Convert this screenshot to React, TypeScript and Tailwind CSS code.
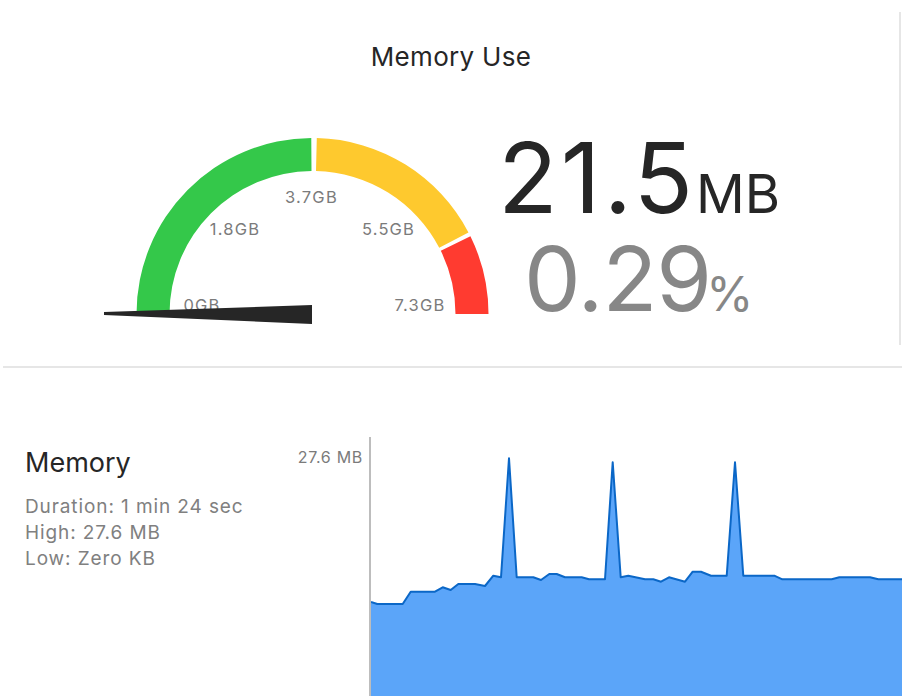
import React from 'react'

const CX = 212.5
const CY = 184
const R_OUT = 176
const R_IN = 143

// annular sector, angles in degrees (0 = right, 90 = top), drawn from a0 down to a1
function sector(a0: number, a1: number) {
  const pt = (r: number, a: number) => {
    const rad = (a * Math.PI) / 180
    return `${(CX + r * Math.cos(rad)).toFixed(2)} ${(CY - r * Math.sin(rad)).toFixed(2)}`
  }
  return `M ${pt(R_OUT, a0)} A ${R_OUT} ${R_OUT} 0 0 1 ${pt(R_OUT, a1)} L ${pt(R_IN, a1)} A ${R_IN} ${R_IN} 0 0 0 ${pt(R_IN, a0)} Z`
}

const labels = [
  { t: '3.7GB', x: 211.5, y: 73 },
  { t: '1.8GB', x: 135, y: 104.5 },
  { t: '5.5GB', x: 288.5, y: 104.5 },
  { t: '0GB', x: 102, y: 181 },
  { t: '7.3GB', x: 320, y: 181 },
]

function Gauge() {
  return (
    <svg width="392" height="200" viewBox="0 0 392 200" className="shrink-0">
      <path d={sector(180, 90.4)} fill="#34C84A" />
      <path d={sector(88.6, 27.6)} fill="#FEC92E" />
      <path d={sector(26.2, 0)} fill="#FF3B30" />
      {labels.map((l) => (
        <text
          key={l.t}
          x={l.x}
          y={l.y}
          textAnchor="middle"
          fontSize="16.5"
          letterSpacing="1.2"
          fill="#7b7b7b"
          fontFamily="Inter, 'Noto Sans', sans-serif"
        >
          {l.t}
        </text>
      ))}
      {/* needle */}
      <polygon points="4,182 212,175 212,194 4,185" fill="#262626" />
    </svg>
  )
}

const points: [number, number][] = [
  [0, 165], [6.3, 167], [31.7, 167], [39.7, 154.7], [64, 154.7], [71.7, 150.3],
  [79.7, 153], [87.3, 147], [104, 147], [114, 149], [122.3, 138.7], [130, 140.3],
  [138, 21.3], [145.7, 140.3], [162.3, 140.3], [170, 143], [178.3, 137], [185.7, 137],
  [194, 140.3], [210.7, 140.3], [218, 142.3], [234, 142.3], [241.7, 25.3], [249.7, 140.3],
  [257.3, 138.7], [274, 142.3], [282.3, 142.3], [290, 144.7], [298, 140.3], [314, 144.7],
  [321.7, 134.7], [330, 134.7], [340, 138.7], [355.7, 138.7], [364, 25.3], [372.3, 138.7],
  [403.3, 138.7], [411.3, 142.3], [460.7, 142.3], [468.3, 140.3], [499, 140.3], [507.3, 142.3],
  [531, 142.3],
]

function MemoryChart() {
  const line = points.map((p) => p.join(',')).join(' ')
  const area = `0,259 ${line} 531,259`
  return (
    <svg width="531" height="259" viewBox="0 0 531 259" className="block">
      <polygon points={area} fill="#5BA5F9" />
      <polyline points={line} fill="none" stroke="#0B67C7" strokeWidth="2" strokeLinejoin="round" />
    </svg>
  )
}

export default function App() {
  return (
    <div className="w-[902px] h-[696px] overflow-hidden bg-white font-['Inter','Noto_Sans',sans-serif]">
      {/* Memory use gauge */}
      <section className="ml-[3px] h-[368px] pt-[12px] border-b-2 border-[#e6e6e6]">
        <div className="h-[333px] w-[898px] border-r-2 border-[#e6e6e6]">
          <h1 className="pt-[29px] text-center text-[26px] leading-[32px] tracking-[0.3px] text-[#262626]">Memory Use</h1>
          <div className="mt-[57px] flex items-start pl-[97px]">
            <Gauge />
            <div className="ml-[6px] mt-[8px] flex flex-col">
              <div className="flex items-baseline text-[#262626]">
                <span className="text-[98px] leading-[80px] tracking-[3px]">21.5</span>
                <span className="text-[54px] leading-[40px]">MB</span>
              </div>
              <div className="ml-[26px] mt-[25px] text-[#878787]">
                <span className="text-[90px] leading-[72px] tracking-[-1px]">
                  0.29<span className="-ml-[5px] text-[48px] tracking-normal">%</span>
                </span>
              </div>
            </div>
          </div>
        </div>
      </section>

      {/* Memory timeline */}
      <section className="flex pt-[69px]">
        <div className="flex w-[369px] shrink-0 justify-between">
          <div className="pl-[25px] pt-[10px]">
            <h2 className="text-[27px] leading-[32px] text-[#262626]">Memory</h2>
            <div className="mt-[15px] text-[19px] leading-[26px] tracking-[0.9px] text-[#808080]">
              <p>Duration: 1 min 24 sec</p>
              <p>High: 27.6 MB</p>
              <p>Low: Zero KB</p>
            </div>
          </div>
          <span className="pr-[6px] pt-[10px] text-[16px] leading-[20px] tracking-[0.7px] text-[#7b7b7b]">27.6 MB</span>
        </div>
        <div className="border-l-2 border-[#bdbdbd]">
          <MemoryChart />
        </div>
      </section>
    </div>
  )
}
